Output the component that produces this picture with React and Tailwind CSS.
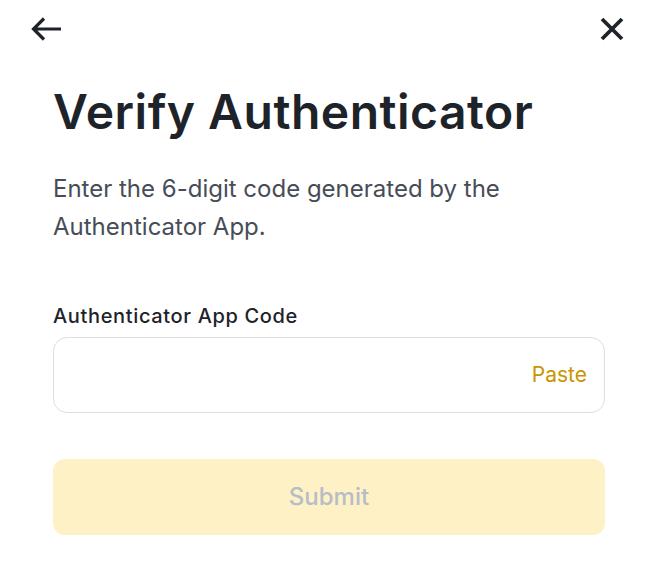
export default function App() {
  return (
    <div
      className="min-h-screen w-full bg-white"
      style={{ fontFamily: "Inter, 'Noto Sans', sans-serif" }}
    >
      <div className="flex h-[58px] items-center justify-between pl-[31px] pr-[34px]">
        <button className="flex h-8 w-8 items-center justify-center text-[#1e2329]">
          <svg width="32" height="32" viewBox="0 0 32 32" fill="none">
            <path
              d="M3 16H30M13 5.5L2.5 16L13 26.5"
              stroke="currentColor"
              strokeWidth="3.2"
            />
          </svg>
        </button>
        <button className="flex h-6 w-6 items-center justify-center text-[#1e2329]">
          <svg width="24" height="24" viewBox="0 0 24 24" fill="none">
            <path d="M2 2L22 22M22 2L2 22" stroke="currentColor" strokeWidth="3.8" />
          </svg>
        </button>
      </div>

      <div className="px-[53px]">
        <h1 className="mt-[26px] text-[48px] font-semibold leading-[56px] tracking-[0.5px] text-[#1e2329]">
          Verify Authenticator
        </h1>
        <p className="mt-[30px] max-w-[470px] text-[24px] leading-[38px] text-[#474d57]">
          Enter the 6-digit code generated by the Authenticator App.
        </p>

        <label className="mt-[56px] block text-[20px] font-medium leading-[28px] tracking-[0.65px] text-[#1e2329]">
          Authenticator App Code
        </label>
        <div className="mt-[7px] flex h-[76px] items-center rounded-[14px] border border-[#dcdee2] pl-4 pr-[17px]">
          <input
            className="h-full min-w-0 flex-1 bg-transparent text-[22px] text-[#1e2329] outline-none"
            type="text"
          />
          <button className="text-[21px] text-[#c99400]">Paste</button>
        </div>

        <button className="mt-[46px] flex h-[76px] w-full items-center justify-center rounded-[12px] bg-[#fef1c5] text-[24px] font-medium text-[#b7bdc6]">
          Submit
        </button>
      </div>
    </div>
  );
}
